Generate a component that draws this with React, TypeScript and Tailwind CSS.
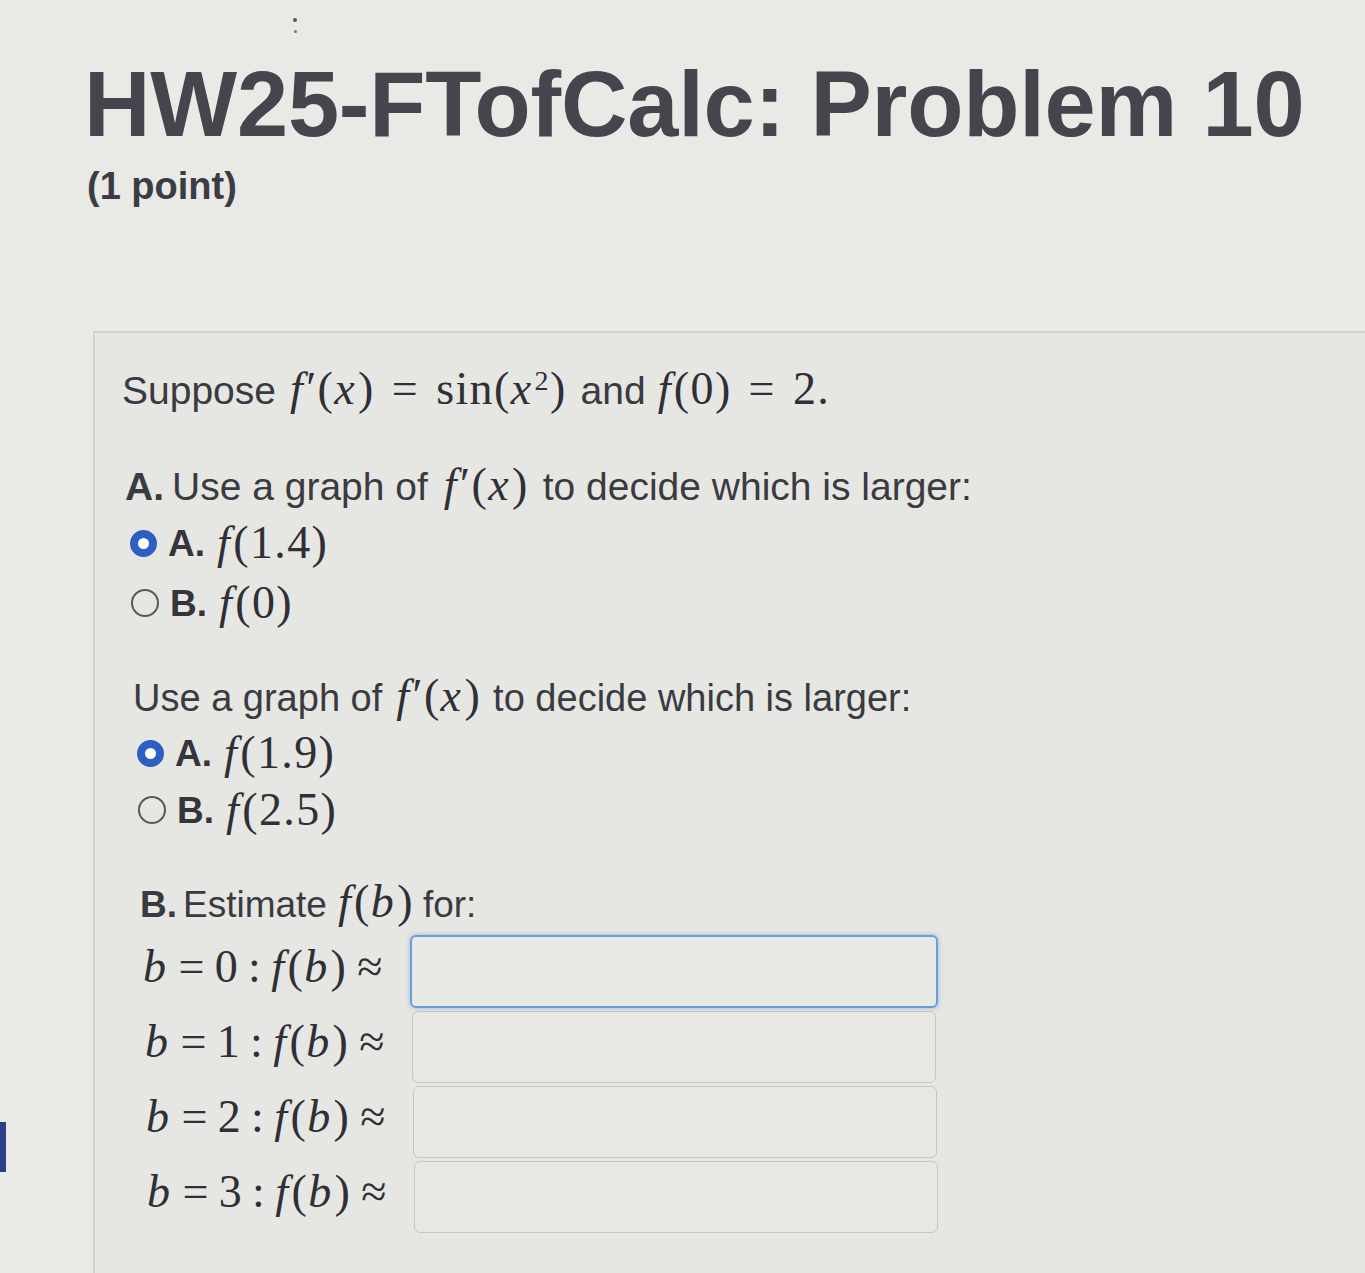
import React from "react";

const sans = { fontFamily: '"Liberation Sans", Arial, sans-serif' };
const serif = { fontFamily: '"Liberation Serif", "Times New Roman", serif' };

const M = ({ children }: { children: React.ReactNode }) => (
  <span style={serif} className="text-[46px] text-[#2f2f35] tracking-[0.03em]">
    {children}
  </span>
);

const I = ({ children }: { children: React.ReactNode }) => <i className="pr-[2px]">{children}</i>;

const Eq = () => <span className="mx-[17px]">=</span>;

const Radio = ({ checked }: { checked?: boolean }) =>
  checked ? (
    <span className="inline-block w-[27px] h-[27px] rounded-full border-[8px] border-[#2d5fc2] bg-white shrink-0" />
  ) : (
    <span className="inline-block w-[28px] h-[28px] rounded-full border-[2.5px] border-[#58585e] shrink-0" />
  );

const Choice = ({ label, value, checked, className }: { label: string; value: string; checked?: boolean; className: string }) => (
  <div className={`flex items-center h-[38px] ${className}`}>
    <Radio checked={checked} />
    <span className="ml-[11px] font-bold text-[37px] text-[#34343a] mr-[12px]">{label}</span>
    <M>
      <I>f</I>({value})
    </M>
  </div>
);

const Row = ({ b, first, className }: { b: number; first?: boolean; className: string }) => (
  <div className={`flex items-center ${className}`}>
    <div className="w-[267px] shrink-0 flex items-center pb-[10px]">
      <M>
        <I>b</I>
        <span className="mx-[9px]">=</span>
        {b}
        <span className="mx-[9px]">:</span>
        <I>f</I>(<I>b</I>)<span className="ml-[10px]">≈</span>
      </M>
    </div>
    <div
      className={
        first
          ? "w-[528px] h-[73px] rounded-[6px] border-2 border-[#6b9fd4] bg-[#e8e8e5] shadow-[0_0_5px_rgba(90,150,215,0.55)]"
          : "w-[524px] h-[72px] rounded-[6px] border-[1.5px] border-[#c6c6c3] bg-[#e7e7e4]"
      }
    />
  </div>
);

export default function App() {
  return (
    <div style={sans} className="relative w-[1365px] h-[1273px] overflow-hidden bg-[#e9e9e6] text-[#3a3a41]">
      <div className="absolute left-0 top-[1122px] w-[6px] h-[50px] bg-[#2c3f86]" />
      <div className="absolute left-[293px] top-[18px] w-[4px] h-[4px] rounded-full bg-[#55555a]" />
      <div className="absolute left-[294px] top-[30px] w-[3px] h-[3px] rounded-full bg-[#77777c]" />

      <h1 className="pl-[84px] pt-[58px] text-[92px] leading-none font-bold text-[#44454d] tracking-[-0.002em]">
        HW25-FTofCalc: Problem 10
      </h1>
      <div className="pl-[87px] mt-[17px] text-[38px] leading-none font-bold text-[#3c3c43]">(1 point)</div>

      <div className="ml-[93px] mt-[126px] h-[1000px] border-l-2 border-t-2 border-[#d2d2cf] bg-[#e6e6e3] pl-[27px] pt-[33px] text-[39px] leading-none">
        <div className="flex items-baseline h-[38px]">
          <span>Suppose</span>
          <span className="ml-[14px]">
            <M>
              <I>f</I>′(<I>x</I>)<Eq />
              sin(<I>x</I>
              <sup className="text-[28px]">2</sup>)
            </M>
          </span>
          <span className="ml-[14px]">and</span>
          <span className="ml-[12px]">
            <M>
              <I>f</I>(0)<Eq />2.
            </M>
          </span>
        </div>

        <div className="flex items-baseline h-[38px] mt-[58px] ml-[3px]">
          <span className="font-bold">A.</span>
          <span className="ml-[8px]">Use a graph of</span>
          <span className="ml-[16px] mr-[14px]">
            <M>
              <I>f</I>′(<I>x</I>)
            </M>
          </span>
          <span>to decide which is larger:</span>
        </div>
        <Choice label="A." value="1.4" checked className="mt-[24px] ml-[8px]" />
        <Choice label="B." value="0" className="mt-[22px] ml-[9px]" />

        <div className="flex items-baseline h-[38px] mt-[51px] ml-[11px] text-[38px]">
          <span>Use a graph of</span>
          <span className="ml-[14px] mr-[12px]">
            <M>
              <I>f</I>′(<I>x</I>)
            </M>
          </span>
          <span>to decide which is larger:</span>
        </div>
        <Choice label="A." value="1.9" checked className="mt-[23px] ml-[15px]" />
        <Choice label="B." value="2.5" className="mt-[19px] ml-[16px]" />

        <div className="flex items-baseline h-[38px] mt-[50px] ml-[18px] text-[37px]">
          <span className="font-bold">B.</span>
          <span className="ml-[6px]">Estimate</span>
          <span className="ml-[11px] mr-[9px]">
            <M>
              <I>f</I>(<I>b</I>)
            </M>
          </span>
          <span>for:</span>
        </div>

        <div className="mt-[18px] flex flex-col gap-[3px]">
          <Row b={0} first className="ml-[21px]" />
          <Row b={1} className="ml-[23px]" />
          <Row b={2} className="ml-[24px]" />
          <Row b={3} className="ml-[25px]" />
        </div>
      </div>
    </div>
  );
}
